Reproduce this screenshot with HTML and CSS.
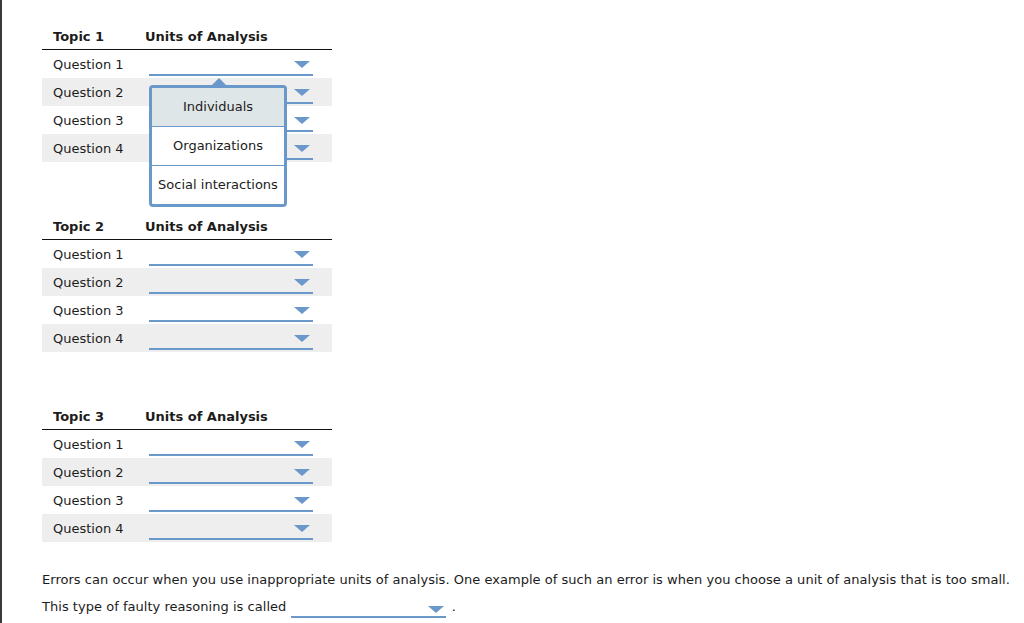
FILE: index.html
```html
<!DOCTYPE html>
<html lang="en">
<head>
    <meta charset="UTF-8">
    <meta name="viewport" content="width=device-width, initial-scale=1.0">
    <title>Units of Analysis</title>
    <link rel="stylesheet" href="styles.css">
</head>
<body>
    <div class="page">
        <table class="topic">
            <tr>
                <th class="col-q">Topic 1</th>
                <th class="col-a">Units of Analysis</th>
            </tr>
            <tr>
                <td class="col-q">Question 1</td>
                <td class="col-a">
                    <div class="dropdown open">
                        <span class="arrow"></span>
                        <div class="menu">
                            <div class="menu-item active">Individuals</div>
                            <div class="menu-item">Organizations</div>
                            <div class="menu-item">Social interactions</div>
                        </div>
                    </div>
                </td>
            </tr>
            <tr class="alt">
                <td class="col-q">Question 2</td>
                <td class="col-a"><div class="dropdown"><span class="arrow"></span></div></td>
            </tr>
            <tr>
                <td class="col-q">Question 3</td>
                <td class="col-a"><div class="dropdown"><span class="arrow"></span></div></td>
            </tr>
            <tr class="alt">
                <td class="col-q">Question 4</td>
                <td class="col-a"><div class="dropdown"><span class="arrow"></span></div></td>
            </tr>
        </table>

        <table class="topic">
            <tr>
                <th class="col-q">Topic 2</th>
                <th class="col-a">Units of Analysis</th>
            </tr>
            <tr>
                <td class="col-q">Question 1</td>
                <td class="col-a"><div class="dropdown"><span class="arrow"></span></div></td>
            </tr>
            <tr class="alt">
                <td class="col-q">Question 2</td>
                <td class="col-a"><div class="dropdown"><span class="arrow"></span></div></td>
            </tr>
            <tr>
                <td class="col-q">Question 3</td>
                <td class="col-a"><div class="dropdown"><span class="arrow"></span></div></td>
            </tr>
            <tr class="alt">
                <td class="col-q">Question 4</td>
                <td class="col-a"><div class="dropdown"><span class="arrow"></span></div></td>
            </tr>
        </table>

        <table class="topic">
            <tr>
                <th class="col-q">Topic 3</th>
                <th class="col-a">Units of Analysis</th>
            </tr>
            <tr>
                <td class="col-q">Question 1</td>
                <td class="col-a"><div class="dropdown"><span class="arrow"></span></div></td>
            </tr>
            <tr class="alt">
                <td class="col-q">Question 2</td>
                <td class="col-a"><div class="dropdown"><span class="arrow"></span></div></td>
            </tr>
            <tr>
                <td class="col-q">Question 3</td>
                <td class="col-a"><div class="dropdown"><span class="arrow"></span></div></td>
            </tr>
            <tr class="alt">
                <td class="col-q">Question 4</td>
                <td class="col-a"><div class="dropdown"><span class="arrow"></span></div></td>
            </tr>
        </table>

        <p class="question">
            Errors can occur when you use inappropriate units of analysis. One example of such an error is when you choose a unit of analysis that is too small.<br>
            This type of faulty reasoning is called <span class="dropdown inline"><span class="arrow"></span></span> .
        </p>
    </div>
</body>
</html>
```

FILE: styles.css
```css
body {
    margin: 0;
    font-family: "DejaVu Sans", Verdana, sans-serif;
    font-size: 13px;
    color: #1c1c1c;
    background: #fff;
}
.page {
    height: 623px;
    box-sizing: border-box;
    border-left: 2px solid #3a3a3a;
    padding: 29px 0 0 40px;
}
.topic {
    width: 290px;
    border-collapse: collapse;
    margin-bottom: 57px;
}
.topic:last-of-type {
    margin-bottom: 0;
}
.topic th {
    text-align: left;
    font-weight: bold;
    line-height: 16px;
    padding: 0 0 4px 0;
    border-bottom: 1px solid #111;
}
.topic td {
    height: 28px;
    padding: 0;
}
.col-q {
    width: 101px;
    padding-left: 11px !important;
    box-sizing: border-box;
}
td.col-a {
    padding-left: 6px !important;
}
th.col-a {
    padding-left: 2px !important;
}
.alt td {
    background-color: #eeeeee;
}
.dropdown {
    position: relative;
    width: 164px;
    height: 22px;
    margin-top: 2px;
    box-sizing: border-box;
    border-bottom: 2px solid #6b98cb;
    display: flex;
    justify-content: flex-end;
    align-items: center;
    padding-right: 3px;
}
.arrow {
    width: 0;
    height: 0;
    border-left: 8px solid transparent;
    border-right: 8px solid transparent;
    border-top: 7px solid #6b98cb;
}
.menu {
    position: absolute;
    left: 0;
    top: 31px;
    width: 138px;
    box-sizing: border-box;
    border: 3px solid #6b98cb;
    border-radius: 4px;
    background: #fff;
    text-align: center;
    z-index: 2;
}
.menu::before {
    content: "";
    position: absolute;
    top: -10px;
    left: 60px;
    border-left: 7px solid transparent;
    border-right: 7px solid transparent;
    border-bottom: 7px solid #6b98cb;
}
.menu-item {
    line-height: 38px;
    white-space: nowrap;
}
.menu-item + .menu-item {
    border-top: 1px solid #6b98cb;
}
.menu-item.active {
    background-color: #dfe6e8;
}
.question {
    margin: 24px 0 0 0;
    line-height: 27px;
    letter-spacing: 0.03px;
}
.dropdown.inline {
    display: inline-flex;
    vertical-align: -2px;
    width: 155px;
    height: 14px;
    margin: 0 2px 0 0;
    padding-right: 2px;
}
```
